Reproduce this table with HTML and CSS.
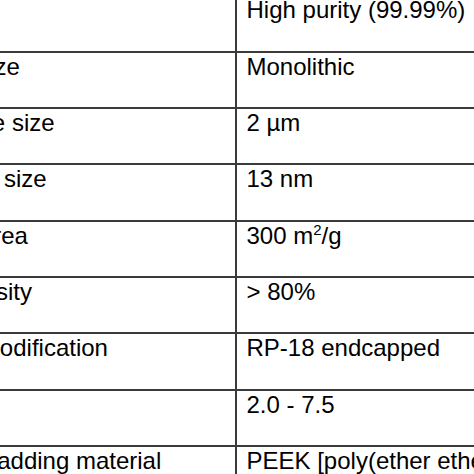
FILE: index.html
```html
<!DOCTYPE html>
<html>
<head>
<meta charset="utf-8">
<link rel="stylesheet" href="styles.css">
</head>
<body>
<div class="table">
  <div class="cell key">Silica type</div><div class="cell val">High purity (99.99%)</div>
  <div class="cell key">Particle size</div><div class="cell val">Monolithic</div>
  <div class="cell key">Macropore size</div><div class="cell val">2 µm</div>
  <div class="cell key">Mesopore size</div><div class="cell val">13 nm</div>
  <div class="cell key">Surface area</div><div class="cell val">300 m<sup>2</sup>/g</div>
  <div class="cell key">Total porosity</div><div class="cell val">&gt; 80%</div>
  <div class="cell key">Surface modification</div><div class="cell val">RP-18 endcapped</div>
  <div class="cell key">pH range</div><div class="cell val">2.0 - 7.5</div>
  <div class="cell key">Column cladding material</div><div class="cell val">PEEK [poly(ether ether ketone)]</div>
</div>
</body>
</html>
```
FILE: styles.css
```css
html, body {
  margin: 0;
  padding: 0;
  background: #fff;
  overflow: hidden;
  width: 474px;
  height: 474px;
}
.table {
  display: grid;
  grid-template-columns: 355px 600px;
  grid-auto-rows: 56.33px;
  margin-left: -118px;
  margin-top: -3.8px;
  font-family: "Liberation Sans", Arial, sans-serif;
  font-size: 24px;
  color: #000;
}
.cell {
  box-sizing: border-box;
  border-bottom: 2px solid #3a3a3a;
  white-space: nowrap;
  line-height: normal;
}
.key {
  border-right: 2px solid #3a3a3a;
  padding-left: 8.5px;
}
.val {
  padding-left: 9.5px;
}
sup {
  font-size: 15px;
  line-height: 0;
  vertical-align: 9px;
}
```
